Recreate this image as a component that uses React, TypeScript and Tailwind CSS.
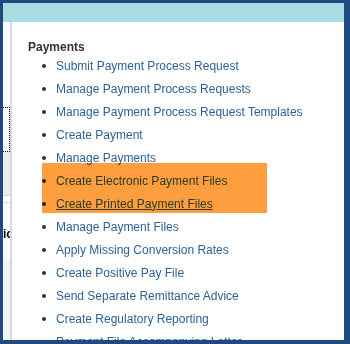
import React from "react";

/* ========================= DATA ========================= */
const items = [
  "Submit Payment Process Request",
  "Manage Payment Process Requests",
  "Manage Payment Process Request Templates",
  "Create Payment",
  "Manage Payments",
  "Create Electronic Payment Files",
  "Create Printed Payment Files",
  "Manage Payment Files",
  "Apply Missing Conversion Rates",
  "Create Positive Pay File",
  "Send Separate Remittance Advice",
  "Create Regulatory Reporting",
  "Payment File Accompanying Letter",
];

const App: React.FC = () => {
  return (
    <div
      className="w-[350px] h-[344px] bg-[#1f4a80] pt-[3px] pl-[3px] pr-[6px] pb-[4px] overflow-hidden"
      style={{ fontFamily: '"Liberation Sans", Arial, sans-serif' }}
    >
      <div className="flex flex-col h-full overflow-hidden">
        {/* ========================= TOP BAND ========================= */}
        <div className="h-[19px] shrink-0 bg-[#a9dce3]" />

        <div className="flex flex-1 min-h-0">
          {/* ========================= PAGE BEHIND ========================= */}
          <div className="w-[7px] shrink-0 bg-white flex flex-col overflow-hidden">
            <div className="h-[85px] shrink-0" />
            <div className="h-[45px] shrink-0 border-t border-b border-r border-dotted border-black" />
            <div className="h-[44px] shrink-0 bg-[#ececec] border-b border-[#d4d4d4]" />
            <div className="h-[7px] shrink-0 border-b border-[#dcdcdc]" />
            <div className="h-[24px] shrink-0" />
            <div className="text-[12px] font-bold text-black leading-[14px] whitespace-nowrap">ic</div>
            <div className="flex-1 bg-[#f4f4f4] mt-[20px]" />
          </div>

          {/* ========================= POPUP ========================= */}
          <div className="relative flex-1 bg-white border-l-2 border-[#d8d8e0] pt-[18px] pl-[16px] overflow-hidden">
            <div className="text-[12px] leading-[14px] font-bold text-[#333333]">
              Payments
            </div>
            <ul className="pl-[14px]">
              {items.map((item, i) => (
                <li
                  key={item}
                  className="h-[23px] flex items-center gap-[10px] text-[12px] text-[#2e6294] whitespace-nowrap"
                >
                  <span className="w-[4px] h-[4px] rounded-full bg-[#333333] shrink-0" />
                  <span className={i === 6 ? "underline" : ""}>{item}</span>
                </li>
              ))}
            </ul>

            {/* highlight overlay */}
            <div className="absolute left-[30px] top-[141px] w-[225px] h-[50px] bg-[#fe9e3e] mix-blend-multiply pointer-events-none" />
          </div>
        </div>
      </div>
    </div>
  );
};

export default App;
